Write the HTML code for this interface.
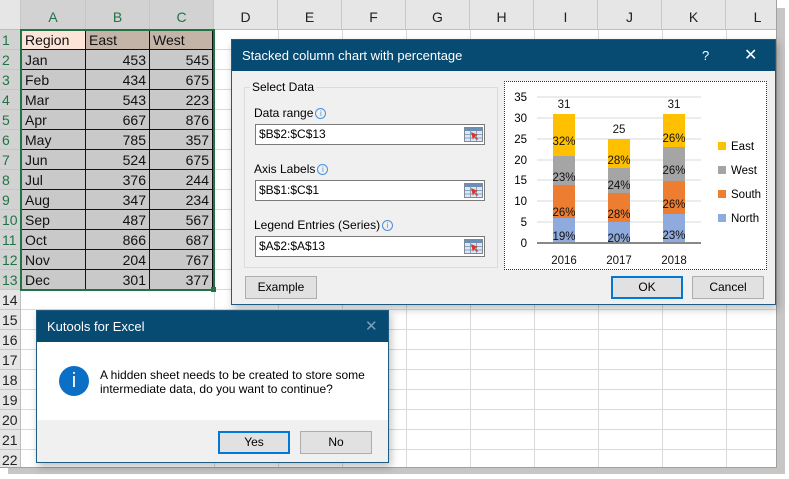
<!DOCTYPE html>
<html><head><meta charset="utf-8"><style>
*{box-sizing:border-box;margin:0;padding:0}
body{width:789px;height:479px;position:relative;background:#fff;font-family:"Liberation Sans",sans-serif;overflow:hidden}
.a{position:absolute}
.sheet{left:0;top:0;width:777px;height:468px;background:#fff;border-right:1px solid #a0a0a0;border-bottom:1px solid #a0a0a0;overflow:hidden}
.shadow{left:777px;top:8px;width:8px;height:466px;background:#c8c6c4}
.shadowb{left:8px;top:468px;width:777px;height:6px;background:#c8c6c4}
.ch{top:0;height:30px;background:#e6e6e6;border-right:1px solid #c6c6c6;border-bottom:1px solid #bdbdbd;font-size:14px;text-align:center;line-height:34px;color:#222}
.rh{left:0;width:21px;height:20px;background:#e6e6e6;border-bottom:1px solid #c6c6c6;border-right:1px solid #bdbdbd;font-size:14px;line-height:20px;color:#222;padding-left:2px}
.gl{background:#dadada}
.cell{height:20px;font-size:14px;line-height:20px;padding:0 3px;background:#c9c9c9;border-right:1px solid #111;border-bottom:1px solid #111;color:#111}
.r{text-align:right}
.dlg{background:#f0f0f0;border:1px solid #1f5a80;box-shadow:2px 4px 8px rgba(0,0,0,.25)}
.tb{background:#074a72;color:#fff;font-size:13px;height:31px;line-height:31px;padding-left:10px}
.in{background:#fff;border:1px solid #7a7a7a;height:21px;font-size:12px;line-height:19px;padding-left:3px;color:#000}
.lbl{font-size:12px;color:#000}
.btn{background:#e1e1e1;border:1px solid #adadad;font-size:12px;text-align:center;line-height:21px;height:23px}
.sel{border:2px solid #0078d7;line-height:19px}
.ico{width:19px;height:15px}
.inf{display:inline-block;width:11px;height:11px;border:1px solid #4a90d9;border-radius:50%;font-size:8px;line-height:9px;text-align:center;color:#4a90d9;vertical-align:1px;margin-left:2px}
</style></head><body>
<div class="a sheet" id="sh"></div>
<div class="a shadow"></div><div class="a shadowb"></div>

<div class="a dlg" style="left:231px;top:39px;width:545px;height:266px">
 <div class="tb">Stacked column chart with percentage<span class="a" style="left:470px;top:0">?</span><span class="a" style="left:512px;top:0;font-size:16px">✕</span></div>
 <div class="a" style="left:12px;top:47px;width:254px;height:181px;border:1px solid #dcdcdc"></div>
 <div class="a lbl" style="left:18px;top:40px;background:#f0f0f0;padding:0 2px">Select Data</div>
 <div class="a lbl" style="left:22px;top:66px">Data range<span class="inf">i</span></div>
 <div class="a in" style="left:23px;top:84px;width:230px">$B$2:$C$13</div>
 <svg class="a ico" style="left:232px;top:87px" viewBox="0 0 19 15"><rect x=".5" y=".5" width="18" height="14" fill="#dfe8f2" stroke="#7d8a99"/><rect x="1" y="1" width="17" height="3" fill="#6d8fb5"/><path d="M1 7.5H18M1 11H18M6.5 4V14M12.5 4V14" stroke="#8aa2bd"/><path d="M7 5l7 3-3 1 3 3-1 1-3-3-1 3z" fill="#d9352a"/></svg>
 <div class="a lbl" style="left:22px;top:122px">Axis Labels<span class="inf">i</span></div>
 <div class="a in" style="left:23px;top:140px;width:230px">$B$1:$C$1</div>
 <svg class="a ico" style="left:232px;top:143px" viewBox="0 0 19 15"><rect x=".5" y=".5" width="18" height="14" fill="#dfe8f2" stroke="#7d8a99"/><rect x="1" y="1" width="17" height="3" fill="#6d8fb5"/><path d="M1 7.5H18M1 11H18M6.5 4V14M12.5 4V14" stroke="#8aa2bd"/><path d="M7 5l7 3-3 1 3 3-1 1-3-3-1 3z" fill="#d9352a"/></svg>
 <div class="a lbl" style="left:22px;top:178px">Legend Entries (Series)<span class="inf">i</span></div>
 <div class="a in" style="left:23px;top:196px;width:230px">$A$2:$A$13</div>
 <svg class="a ico" style="left:232px;top:199px" viewBox="0 0 19 15"><rect x=".5" y=".5" width="18" height="14" fill="#dfe8f2" stroke="#7d8a99"/><rect x="1" y="1" width="17" height="3" fill="#6d8fb5"/><path d="M1 7.5H18M1 11H18M6.5 4V14M12.5 4V14" stroke="#8aa2bd"/><path d="M7 5l7 3-3 1 3 3-1 1-3-3-1 3z" fill="#d9352a"/></svg>
 <div class="a btn" style="left:13px;top:236px;width:72px">Example</div>
 <div class="a" style="left:272px;top:41px;width:263px;height:189px;border:1px dotted #333;background:#fff">
 <svg width="263" height="189" style="font-family:'Liberation Sans',sans-serif;font-size:11.5px">
  <g stroke="#d9d9d9">
   <line x1="32" y1="15" x2="196" y2="15"/><line x1="32" y1="36" x2="196" y2="36"/><line x1="32" y1="57" x2="196" y2="57"/><line x1="32" y1="78" x2="196" y2="78"/><line x1="32" y1="98" x2="196" y2="98"/><line x1="32" y1="119" x2="196" y2="119"/><line x1="32" y1="140" x2="196" y2="140"/>
  </g>
  <g text-anchor="end"><text x="22" y="19">35</text><text x="22" y="40">30</text><text x="22" y="61">25</text><text x="22" y="82">20</text><text x="22" y="102">15</text><text x="22" y="123">10</text><text x="22" y="144">5</text><text x="22" y="165">0</text></g>
  <rect x="48" y="136" width="22" height="25" fill="#8faadc"/><rect x="48" y="103" width="22" height="33" fill="#ed7d31"/><rect x="48" y="74" width="22" height="29" fill="#a5a5a5"/><rect x="48" y="32" width="22" height="42" fill="#ffc000"/>
  <rect x="103" y="140" width="22" height="21" fill="#8faadc"/><rect x="103" y="111" width="22" height="29" fill="#ed7d31"/><rect x="103" y="86" width="22" height="25" fill="#a5a5a5"/><rect x="103" y="57" width="22" height="29" fill="#ffc000"/>
  <rect x="158" y="132" width="22" height="29" fill="#8faadc"/><rect x="158" y="99" width="22" height="33" fill="#ed7d31"/><rect x="158" y="65" width="22" height="34" fill="#a5a5a5"/><rect x="158" y="32" width="22" height="33" fill="#ffc000"/>
  <line x1="32" y1="161" x2="196" y2="161" stroke="#888" stroke-width="2"/>
  <g text-anchor="middle" fill="#111">
   <text x="59" y="26">31</text><text x="114" y="51">25</text><text x="169" y="26">31</text>
   <text x="59" y="63">32%</text><text x="59" y="99">23%</text><text x="59" y="134">26%</text><text x="59" y="158">19%</text>
   <text x="114" y="82">28%</text><text x="114" y="107">24%</text><text x="114" y="136">28%</text><text x="114" y="160">20%</text>
   <text x="169" y="60">26%</text><text x="169" y="92">26%</text><text x="169" y="126">26%</text><text x="169" y="157">23%</text>
   <text x="59" y="182">2016</text><text x="114" y="182">2017</text><text x="169" y="182">2018</text>
  </g>
  <rect x="213" y="60" width="8" height="8" fill="#ffc000"/><text x="226" y="68">East</text>
  <rect x="213" y="84" width="8" height="8" fill="#a5a5a5"/><text x="226" y="92">West</text>
  <rect x="213" y="108" width="8" height="8" fill="#ed7d31"/><text x="226" y="116">South</text>
  <rect x="213" y="132" width="8" height="8" fill="#8faadc"/><text x="226" y="140">North</text>
 </svg></div>
 <div class="a btn sel" style="left:379px;top:236px;width:72px">OK</div>
 <div class="a btn" style="left:460px;top:236px;width:72px">Cancel</div>
</div>

<div class="a dlg" style="left:36px;top:310px;width:353px;height:153px;background:#f0f0f0">
 <div class="tb">Kutools for Excel<span class="a" style="left:328px;top:0;color:#7fa0b8;font-size:15px">✕</span></div>
 <div class="a" style="left:0;top:31px;width:351px;height:78px;background:#fff"></div>
 <div class="a" style="left:22px;top:55px;width:30px;height:30px;border-radius:50%;background:#0b6fc6;color:#fff;text-align:center;font-size:20px;line-height:30px">i</div>
 <div class="a" style="left:63px;top:57px;font-size:12px;line-height:14px;color:#000">A hidden sheet needs to be created to store some<br>intermediate data, do you want to continue?</div>
 <div class="a btn sel" style="left:181px;top:120px;width:72px">Yes</div>
 <div class="a btn" style="left:263px;top:120px;width:72px">No</div>
</div>

<script>
var s=document.getElementById('sh'),h='';
var cols='ABCDEFGHIJKL';
h+='<div class="a ch" style="left:0;width:21px"></div>';
for(var i=0;i<12;i++){var l=i==0?21:22+i*64;h+='<div class="a ch" style="left:'+l+'px;width:'+(i==0?65:64)+'px'+(i<3?';color:#217346;background:#d2d2d2':'')+'">'+cols[i]+'</div>';}
for(var r=1;r<=22;r++){var t=30+(r-1)*20;h+='<div class="a rh" style="top:'+t+'px'+(r<=13?';color:#217346;background:#d2d2d2':'')+'">'+r+'</div>';
 for(var i=3;i<12;i++)h+='<div class="a gl" style="left:'+(86+(i-1)*64)+'px;top:'+t+'px;width:1px;height:20px"></div>';
 h+='<div class="a gl" style="left:21px;top:'+(t+19)+'px;width:760px;height:1px"></div>';}
var d=[['Jan',453,545],['Feb',434,675],['Mar',543,223],['Apr',667,876],['May',785,357],['Jun',524,675],['Jul',376,244],['Aug',347,234],['Sep',487,567],['Oct',866,687],['Nov',204,767],['Dec',301,377]];
h+='<div class="a cell" style="left:22px;top:30px;width:64px;background:#fde4d8">Region</div><div class="a cell" style="left:86px;top:30px;width:64px;background:#c4b4a8">East</div><div class="a cell" style="left:150px;top:30px;width:63px;background:#c4b4a8">West</div>';
for(var k=0;k<12;k++){var t=50+k*20;h+='<div class="a cell" style="left:22px;top:'+t+'px;width:64px">'+d[k][0]+'</div><div class="a cell r" style="left:86px;top:'+t+'px;width:64px">'+d[k][1]+'</div><div class="a cell r" style="left:150px;top:'+t+'px;width:63px">'+d[k][2]+'</div>';}
h+='<div class="a" style="left:20px;top:29px;width:195px;height:262px;border:2px solid #217346"></div><div class="a" style="left:211px;top:287px;width:5px;height:5px;background:#217346"></div>';
s.innerHTML=h;
</script>
</body></html>
